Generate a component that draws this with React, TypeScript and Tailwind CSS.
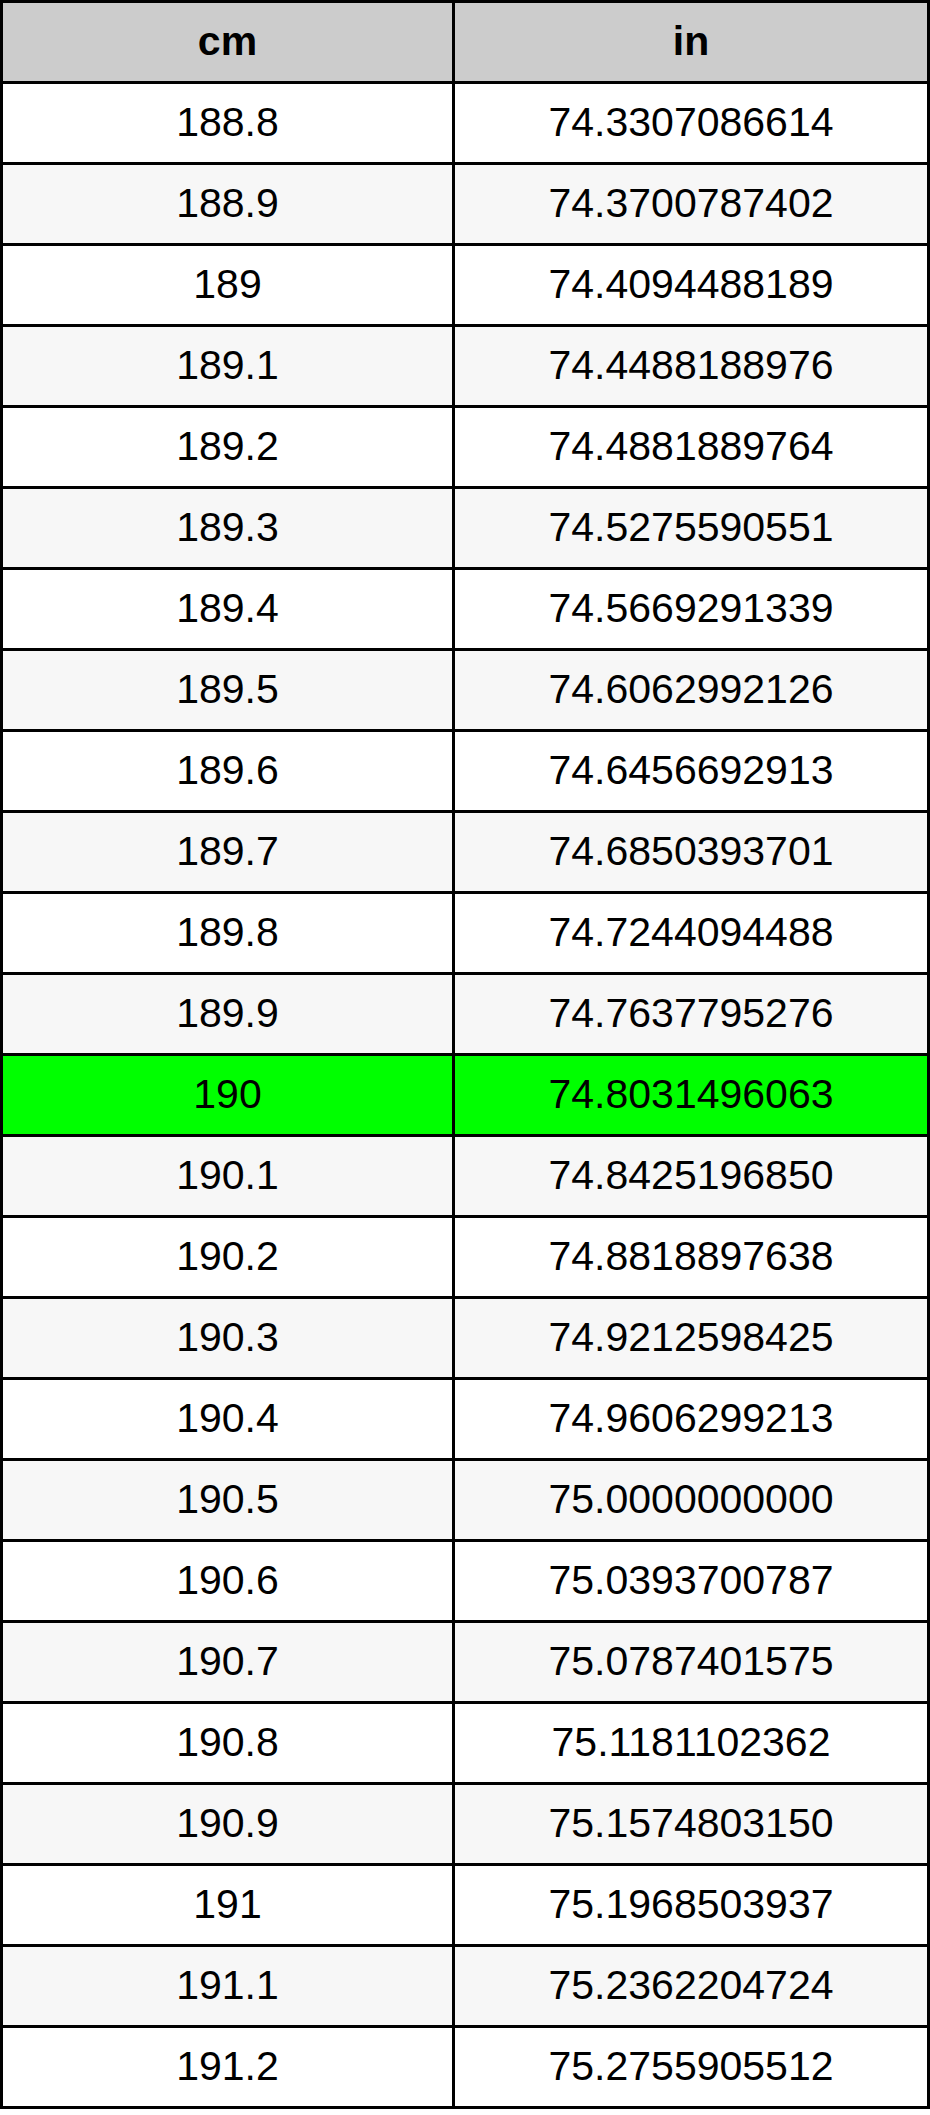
const rows: [string, string][] = [
  ['188.8', '74.3307086614'],
  ['188.9', '74.3700787402'],
  ['189', '74.4094488189'],
  ['189.1', '74.4488188976'],
  ['189.2', '74.4881889764'],
  ['189.3', '74.5275590551'],
  ['189.4', '74.5669291339'],
  ['189.5', '74.6062992126'],
  ['189.6', '74.6456692913'],
  ['189.7', '74.6850393701'],
  ['189.8', '74.7244094488'],
  ['189.9', '74.7637795276'],
  ['190', '74.8031496063'],
  ['190.1', '74.8425196850'],
  ['190.2', '74.8818897638'],
  ['190.3', '74.9212598425'],
  ['190.4', '74.9606299213'],
  ['190.5', '75.0000000000'],
  ['190.6', '75.0393700787'],
  ['190.7', '75.0787401575'],
  ['190.8', '75.1181102362'],
  ['190.9', '75.1574803150'],
  ['191', '75.1968503937'],
  ['191.1', '75.2362204724'],
  ['191.2', '75.2755905512'],
];

export default function App() {
  return (
    <div className="bg-white w-[930px] h-[2115px] font-['Liberation_Sans',Arial,sans-serif] text-black">
      <div className="grid grid-cols-[449px_472px] gap-[3px] p-[3px] bg-black w-[930px]">
        {/* Header */}
        <div className="h-[78px] bg-[#cccccc] flex items-center justify-center text-[41px] font-bold">cm</div>
        <div className="h-[78px] bg-[#cccccc] flex items-center justify-center text-[41px] font-bold">in</div>

        {rows.map(([cm, inch], i) => {
          const bg = cm === '190' ? 'bg-[#00ff00]' : i % 2 === 0 ? 'bg-white' : 'bg-[#f7f7f7]';
          return [
            <div key={cm + 'a'} className={`h-[78px] ${bg} flex items-center justify-center text-[41px]`}>
              {cm}
            </div>,
            <div key={cm + 'b'} className={`h-[78px] ${bg} flex items-center justify-center text-[41px]`}>
              {inch}
            </div>,
          ];
        })}
      </div>
    </div>
  );
}
